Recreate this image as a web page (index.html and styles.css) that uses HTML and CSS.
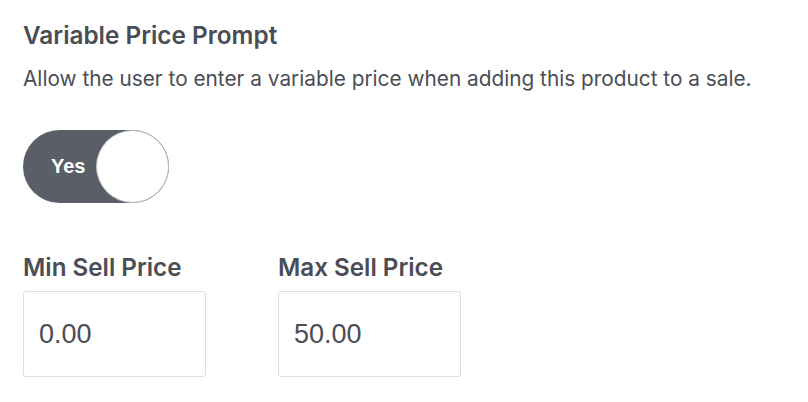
FILE: index.html
```html
<!DOCTYPE html>
<html>
<head>
<meta charset="utf-8">
<link rel="stylesheet" href="styles.css">
</head>
<body>
<div class="panel">
  <h2 class="title">Variable Price Prompt</h2>
  <p class="desc">Allow the user to enter a variable price when adding this product to a sale.</p>
  <div class="toggle">
    <span class="toggle-label">Yes</span>
    <span class="knob"></span>
  </div>
  <div class="fields">
    <div class="field">
      <label class="field-label">Min Sell Price</label>
      <div class="input">0.00</div>
    </div>
    <div class="field">
      <label class="field-label">Max Sell Price</label>
      <div class="input">50.00</div>
    </div>
  </div>
</div>
</body>
</html>
```
FILE: styles.css
```css
html, body {
  margin: 0;
  padding: 0;
  background: #ffffff;
}
.panel {
  padding: 21px 0 0 23px;
  font-family: Inter, "Noto Sans", sans-serif;
  color: #4a4d55;
}
.title {
  margin: 0;
  font-size: 24.3px;
  line-height: 28px;
  font-weight: 600;
}
.desc {
  margin: 17px 0 0 0;
  font-size: 20.8px;
  line-height: 26px;
  font-weight: 400;
  white-space: nowrap;
}
.toggle {
  margin-top: 38px;
  width: 146px;
  height: 73px;
  border-radius: 37px;
  background: #5a5f67;
  display: flex;
  align-items: center;
  justify-content: space-between;
  box-sizing: border-box;
}
.toggle-label {
  padding-left: 28px;
  font-family: "Liberation Sans", Arial, sans-serif;
  font-weight: 700;
  font-size: 20px;
  color: #ffffff;
}
.knob {
  width: 73px;
  height: 73px;
  border-radius: 50%;
  background: #ffffff;
  border: 1px solid #b8bcc2;
  box-sizing: border-box;
}
.fields {
  margin-top: 51px;
  display: flex;
  gap: 72px;
}
.field {
  display: flex;
  flex-direction: column;
}
.field-label {
  font-size: 24.2px;
  line-height: 28px;
  font-weight: 600;
  margin-bottom: 9px;
}
.input {
  width: 183px;
  height: 86px;
  box-sizing: border-box;
  border: 1px solid #dcdde0;
  border-radius: 3px;
  padding-left: 15px;
  display: flex;
  align-items: center;
  font-family: "Liberation Sans", Arial, sans-serif;
  font-size: 27px;
  color: #4a4d55;
}
```
